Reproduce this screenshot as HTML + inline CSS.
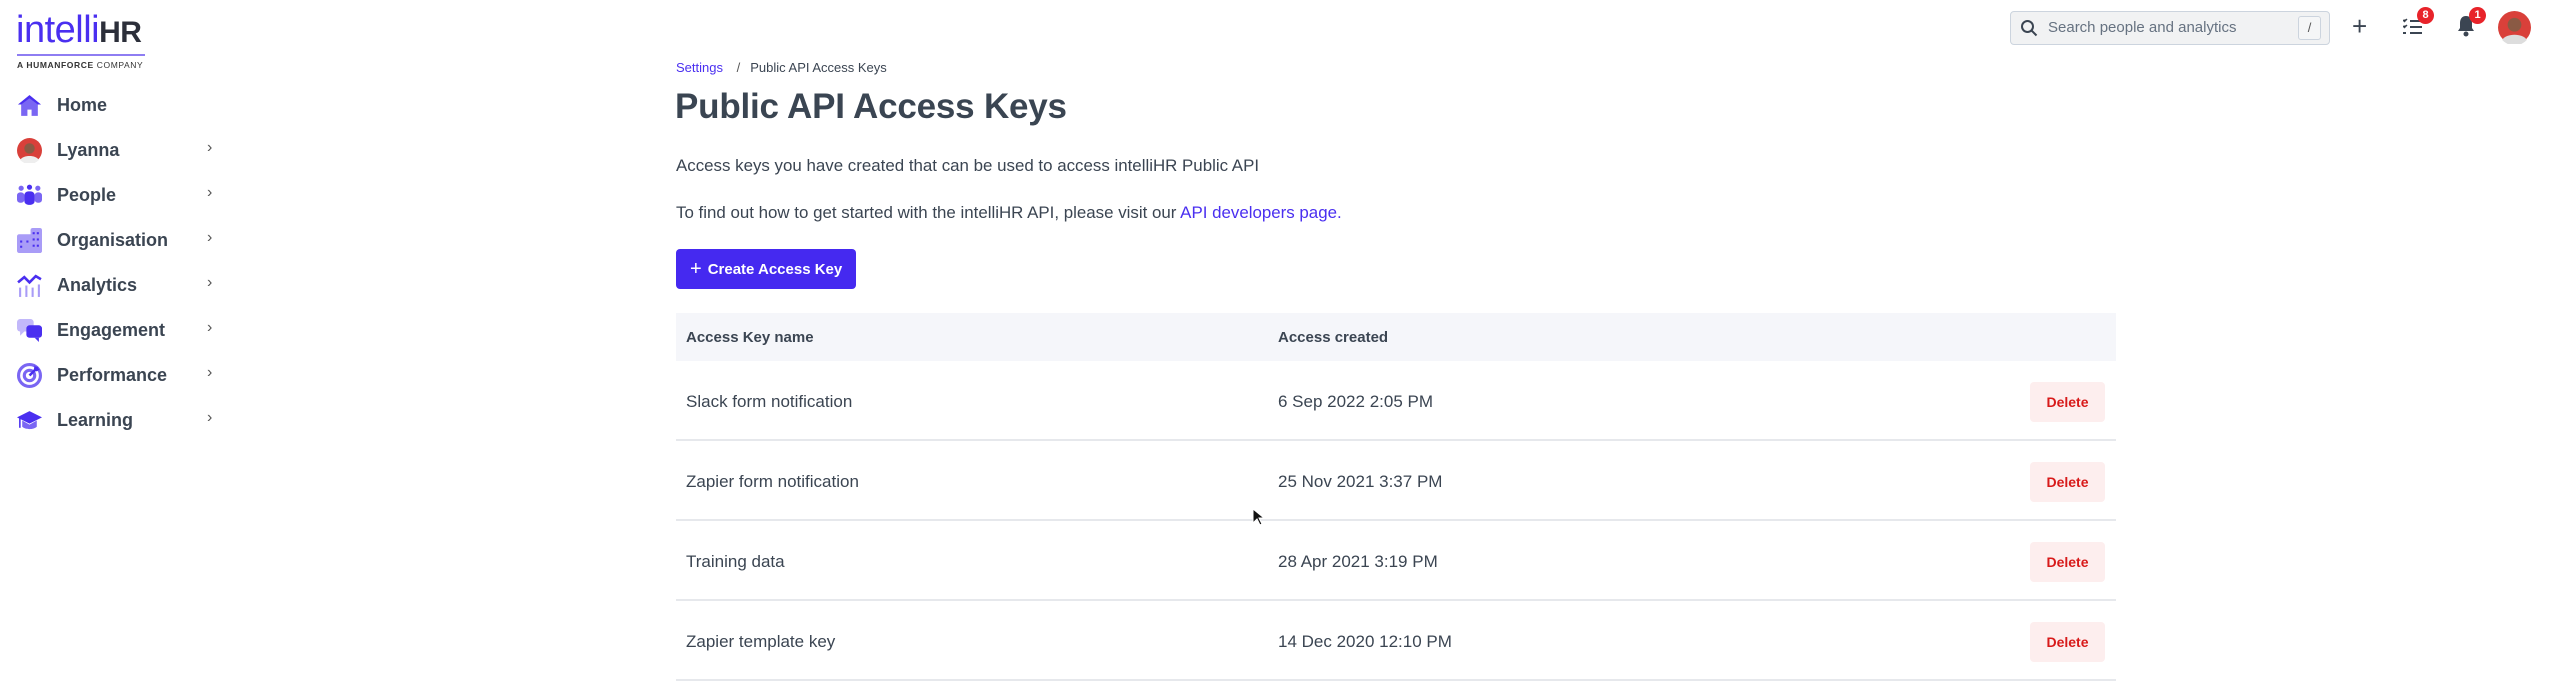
<!DOCTYPE html>
<html><head><meta charset="utf-8"><style>
*{margin:0;padding:0;box-sizing:border-box}
body{width:2553px;height:682px;overflow:hidden;background:#fff;font-family:"Liberation Sans",sans-serif;color:#3b4552;position:relative}
.a{position:absolute;white-space:nowrap}
.nav{position:absolute;left:17px;height:30px;width:200px;display:flex;align-items:center;font-size:18px;font-weight:bold;color:#3b4552}
.nav svg{width:25px;height:25px;margin-right:15px}
.nav .ch{position:absolute;left:190px;top:4px;font-size:16px;color:#555;font-weight:normal}
.row{position:absolute;left:676px;width:1440px;height:80px;border-bottom:2px solid #e6e8ec;font-size:17px}
.row span{position:absolute;top:31px}
.del{position:absolute;left:1354px;top:21px;width:75px;height:40px;background:#fdeeee;border-radius:4px;color:#d81a1a;font-size:14px;font-weight:bold;text-align:center;line-height:40px}
.badge{position:absolute;width:17px;height:17px;border-radius:50%;background:#e8232a;color:#fff;font-size:11px;font-weight:bold;text-align:center;line-height:17px}
</style></head><body>
<!-- logo -->
<div class="a" style="left:16px;top:9px;font-size:38px;color:#4a2ff0;letter-spacing:-0.5px">intelli<span style="color:#2c2f3a;font-weight:bold;font-size:30px">HR</span></div>
<div class="a" style="left:17px;top:54px;width:128px;height:2px;background:#8e7df2"></div>
<div class="a" style="left:17px;top:60px;font-size:8.5px;color:#333;letter-spacing:0.6px"><b>A HUMANFORCE</b> COMPANY</div>

<div class="nav" style="top:90px"><svg viewBox="0 0 24 24"><path d="M12 2L1 11h3v11h6v-6h4v6h6V11h3z" fill="#7a66f3"/><path d="M12 2L1 11h3L12 5l8 6h3z" fill="#4a2ff0"/></svg>Home</div>
<div class="nav" style="top:135px"><svg viewBox="0 0 24 24"><circle cx="12" cy="12" r="12" fill="#d9403a"/><circle cx="12" cy="10" r="5" fill="#8a5a44"/><path d="M3 21c3-5 15-5 18 0a12 12 0 0 1-18 0z" fill="#eee"/></svg>Lyanna<span class="ch">›</span></div>
<div class="nav" style="top:180px"><svg viewBox="0 0 24 24" fill="#7a66f3"><circle cx="4" cy="5" r="2.5"/><circle cx="20" cy="5" r="2.5"/><circle cx="12" cy="4" r="2.5" fill="#4a2ff0"/><rect x="0" y="9" width="7" height="10" rx="3"/><rect x="17" y="9" width="7" height="10" rx="3"/><rect x="7" y="8" width="10" height="13" rx="4" fill="#4a2ff0"/></svg>People<span class="ch">›</span></div>
<div class="nav" style="top:225px"><svg viewBox="0 0 24 24"><rect x="0" y="6" width="24" height="18" rx="2" fill="#a99cf7"/><rect x="13" y="0" width="11" height="24" rx="2" fill="#a99cf7"/><g fill="#4a2ff0"><rect x="3" y="12" width="2" height="2"/><rect x="3" y="17" width="2" height="2"/><rect x="15" y="4" width="2" height="2"/><rect x="19" y="4" width="2" height="2"/><rect x="15" y="10" width="2" height="2"/><rect x="19" y="10" width="2" height="2"/><rect x="15" y="16" width="2" height="2"/><rect x="19" y="16" width="2" height="2"/><rect x="9" y="12" width="2" height="2"/></g></svg>Organisation<span class="ch">›</span></div>
<div class="nav" style="top:270px"><svg viewBox="0 0 24 24"><path d="M1 9l6-5 5 5 6-6 5 3" stroke="#4a2ff0" stroke-width="2.5" fill="none"/><g fill="#a99cf7"><rect x="2" y="14" width="2" height="9"/><rect x="8" y="12" width="2" height="11"/><rect x="14" y="14" width="2" height="9"/><rect x="20" y="11" width="2" height="12"/></g></svg>Analytics<span class="ch">›</span></div>
<div class="nav" style="top:315px"><svg viewBox="0 0 24 24"><rect x="0" y="1" width="16" height="12" rx="3" fill="#c2b8fa"/><path d="M3 13l0 4 4-4z" fill="#c2b8fa"/><rect x="9" y="7" width="15" height="12" rx="3" fill="#4a2ff0"/><path d="M21 19v4l-4-4z" fill="#4a2ff0"/></svg>Engagement<span class="ch">›</span></div>
<div class="nav" style="top:360px"><svg viewBox="0 0 24 24"><circle cx="12" cy="12" r="10.5" fill="none" stroke="#7a66f3" stroke-width="3"/><circle cx="12" cy="12" r="5" fill="none" stroke="#7a66f3" stroke-width="3"/><path d="M12 12L20 4" stroke="#4a2ff0" stroke-width="2.5"/><path d="M17 2l2 3 3 1-3 2-3-1z" fill="#4a2ff0"/></svg>Performance<span class="ch">›</span></div>
<div class="nav" style="top:405px"><svg viewBox="0 0 24 24"><path d="M12 3L0 9l12 6 12-6z" fill="#4a2ff0"/><path d="M5 12v6c3 3 11 3 14 0v-6l-7 4z" fill="#7a66f3"/><rect x="2" y="10" width="1.5" height="9" fill="#4a2ff0"/></svg>Learning<span class="ch">›</span></div>

<!-- topbar -->
<div class="a" style="left:2010px;top:11px;width:320px;height:34px;background:#f1f2f3;border:1px solid #ccd4de;border-radius:4px"></div>
<svg class="a" style="left:2020px;top:19px" width="18" height="18" viewBox="0 0 18 18"><circle cx="7.5" cy="7.5" r="5.5" stroke="#3b4552" stroke-width="2" fill="none"/><path d="M11.5 11.5l5 5" stroke="#3b4552" stroke-width="2"/></svg>
<div class="a" style="left:2048px;top:19px;font-size:15px;color:#667281">Search people and analytics</div>
<div class="a" style="left:2298px;top:16px;width:23px;height:24px;border:1px solid #ccd4de;border-radius:3px;background:#f5f6f7;font-size:13px;text-align:center;line-height:22px;color:#555">/</div>
<div class="a" style="left:2352px;top:11px;font-size:26px;color:#3b4552">+</div>
<svg class="a" style="left:2403px;top:18px" width="20" height="18" viewBox="0 0 20 18"><g stroke="#3b4552" stroke-width="2"><path d="M7 3h12M7 9h12M7 15h12"/><path d="M0 2l1.5 1.5L4 1M0 8l1.5 1.5L4 7" stroke-width="1.4"/></g><rect x="0" y="14" width="3" height="2" fill="#3b4552"/></svg>
<div class="badge" style="left:2417px;top:7px">8</div>
<svg class="a" style="left:2456px;top:15px" width="20" height="22" viewBox="0 0 20 22"><path d="M10 1c-4 0-6 3-6 7v5l-2 3h16l-2-3V8c0-4-2-7-6-7z" fill="#3b4552"/><circle cx="10" cy="19" r="2.5" fill="#3b4552"/></svg>
<div class="badge" style="left:2469px;top:7px">1</div>
<svg class="a" style="left:2498px;top:11px" width="33" height="33" viewBox="0 0 24 24"><circle cx="12" cy="12" r="12" fill="#d9403a"/><circle cx="12" cy="10" r="5" fill="#8a5a44"/><path d="M3 21c3-5 15-5 18 0a12 12 0 0 1-18 0z" fill="#ddd"/></svg>

<!-- content -->
<div class="a" style="left:676px;top:60px;font-size:13px;color:#4a2ff0">Settings <span style="color:#555;margin:0 10px">/</span><span style="color:#3b4552">Public API Access Keys</span></div>
<div class="a" style="left:675px;top:87px;font-size:35px;font-weight:bold;color:#3a4552;letter-spacing:-0.2px">Public API Access Keys</div>
<div class="a" style="left:676px;top:156px;font-size:16.9px">Access keys you have created that can be used to access intelliHR Public API</div>
<div class="a" style="left:676px;top:203px;font-size:16.9px">To find out how to get started with the intelliHR API, please visit our <span style="color:#4a2ff0">API developers page.</span></div>
<div class="a" style="left:676px;top:249px;width:180px;height:40px;background:#4529f0;border-radius:4px;color:#fff;font-size:15px;font-weight:bold;line-height:40px;padding-left:14px"><span style="font-size:20px;font-weight:normal;vertical-align:-1px;margin-right:6px">+</span>Create Access Key</div>

<div class="a" style="left:676px;top:313px;width:1440px;height:48px;background:#f5f6fa;font-size:15px;font-weight:bold">
<span class="a" style="left:10px;top:16px">Access Key name</span><span class="a" style="left:602px;top:16px">Access created</span></div>
<div class="row" style="top:361px"><span style="left:10px">Slack form notification</span><span style="left:602px">6 Sep 2022 2:05 PM</span><div class="del">Delete</div></div>
<div class="row" style="top:441px"><span style="left:10px">Zapier form notification</span><span style="left:602px">25 Nov 2021 3:37 PM</span><div class="del">Delete</div></div>
<div class="row" style="top:521px"><span style="left:10px">Training data</span><span style="left:602px">28 Apr 2021 3:19 PM</span><div class="del">Delete</div></div>
<div class="row" style="top:601px"><span style="left:10px">Zapier template key</span><span style="left:602px">14 Dec 2020 12:10 PM</span><div class="del">Delete</div></div>
<svg class="a" style="left:1252px;top:508px" width="12" height="18" viewBox="0 0 12 18"><path d="M1 1v14l4-4 3 6 2-1-3-6h5z" fill="#111" stroke="#fff" stroke-width="1"/></svg>
</body></html>
